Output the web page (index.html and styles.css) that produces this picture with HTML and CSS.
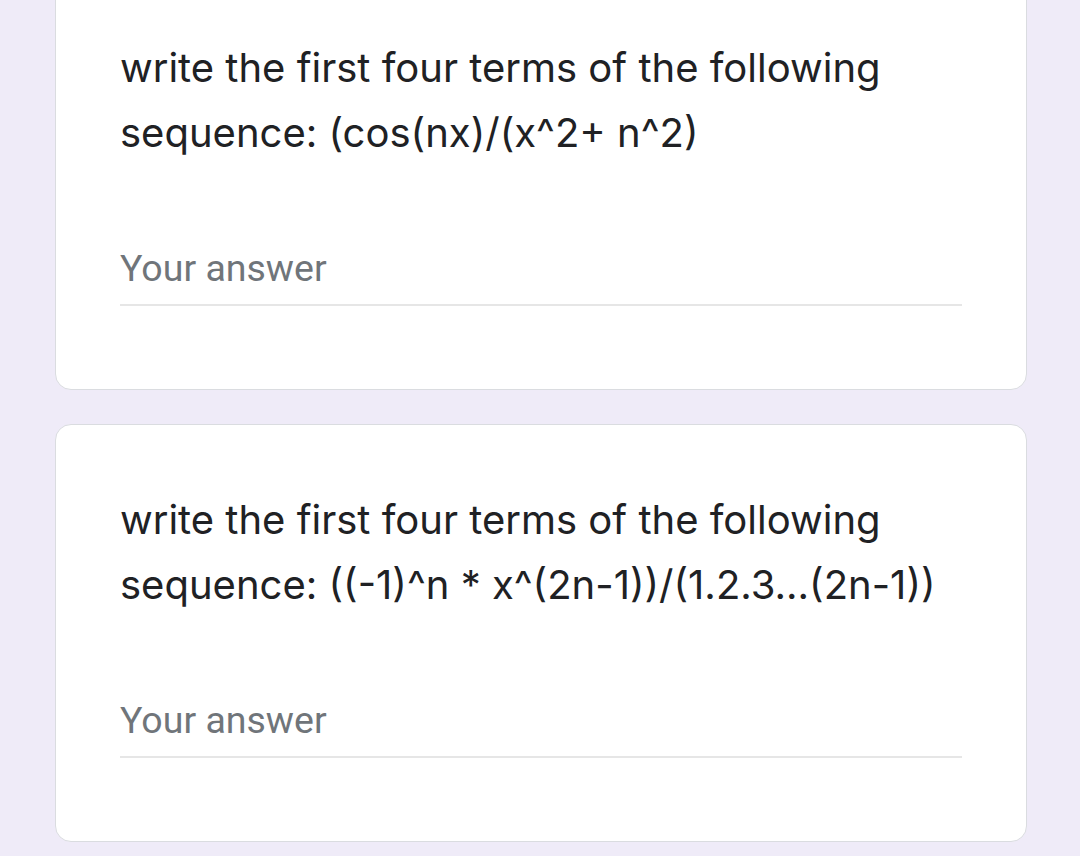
FILE: index.html
```html
<!DOCTYPE html>
<html>
<head>
<meta charset="utf-8">
<link rel="stylesheet" href="styles.css">
</head>
<body>
<main class="page">
  <section class="card card-first">
    <div class="question">write the first four terms of the following sequence: (cos(nx)/(x^2+ n^2)</div>
    <div class="answer">
      <div class="placeholder">Your answer</div>
      <div class="line"></div>
    </div>
  </section>
  <section class="card">
    <div class="question">write the first four terms of the following sequence: ((-1)^n * x^(2n-1))/(1.2.3...(2n-1))</div>
    <div class="answer">
      <div class="placeholder">Your answer</div>
      <div class="line"></div>
    </div>
  </section>
</main>
</body>
</html>
```

FILE: styles.css
```css
html, body {
  margin: 0;
  padding: 0;
  background: #efebf8;
  height: 856px;
  overflow: hidden;
}
.page {
  width: 972px;
  margin-left: 55px;
  display: flex;
  flex-direction: column;
  gap: 34px;
}
.card {
  background: #ffffff;
  border: 1px solid #dadce0;
  border-radius: 16px;
  padding: 62px 64px 83px 64px;
  box-sizing: border-box;
}
.card-first {
  margin-top: -28px;
}
.question {
  font-family: Inter, "Open Sans", sans-serif;
  font-size: 40px;
  line-height: 65px;
  color: #202124;
}
.answer {
  margin-top: 83px;
}
.placeholder {
  font-family: Roboto, sans-serif;
  font-size: 37.5px;
  line-height: 40px;
  color: #70757a;
}
.line {
  margin-top: 16px;
  height: 2px;
  background: #e6e6e6;
}
```
